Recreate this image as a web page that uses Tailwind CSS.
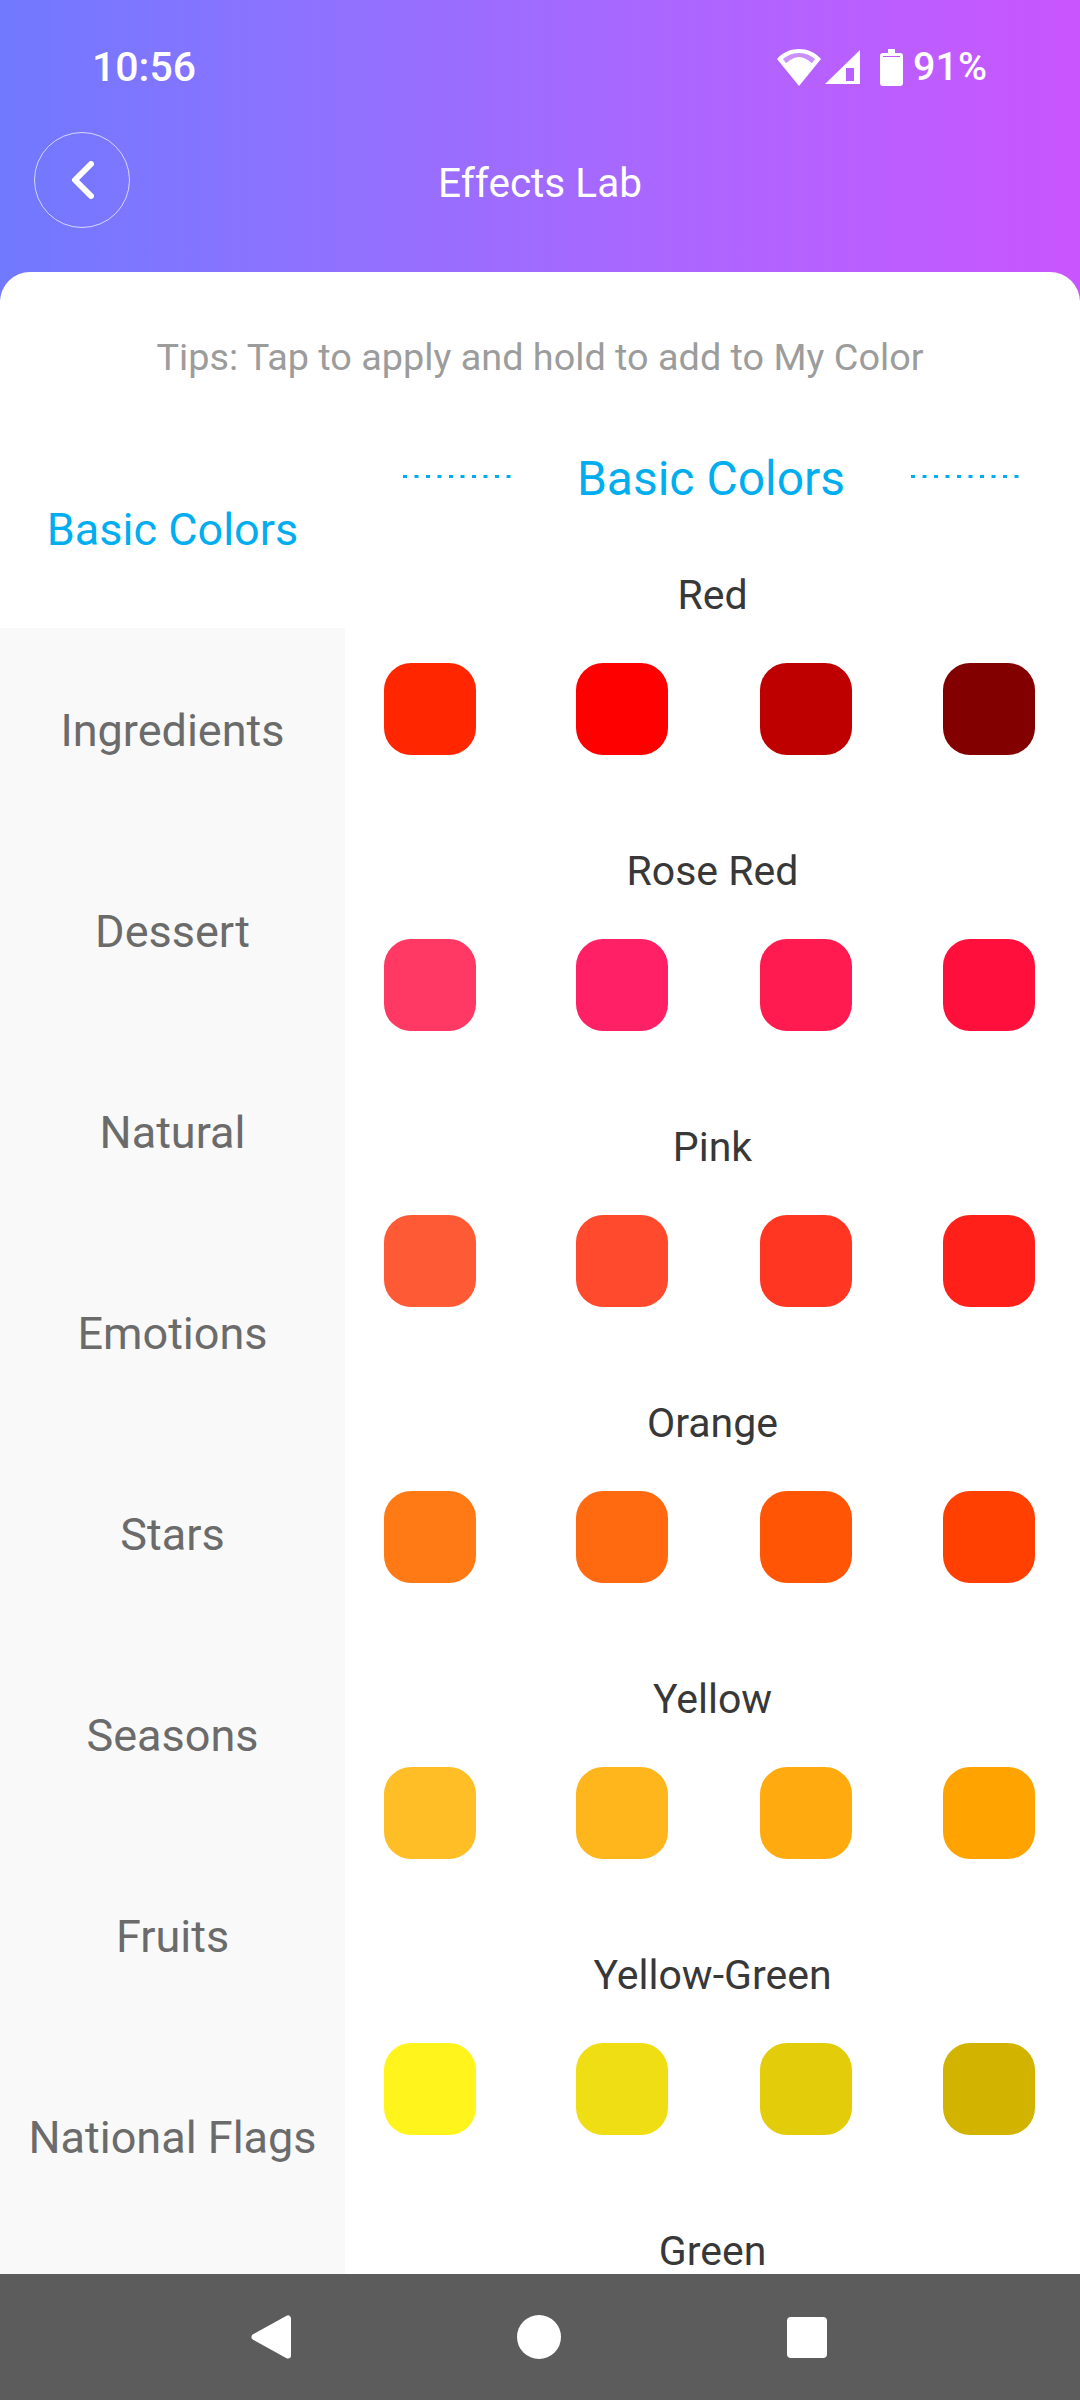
<!DOCTYPE html>
<html lang="en">
<head>
  <meta charset="UTF-8" />
  <meta name="viewport" content="width=device-width, initial-scale=1.0"/>
  <title>Effects Lab</title>
  <script src="https://cdn.jsdelivr.net/npm/@tailwindcss/browser@4"></script>
</head>
<body class="bg-white font-['Roboto',sans-serif]">
  <div class="relative w-[1080px] h-[2400px] flex flex-col overflow-hidden">
    <!-- header -->
    <header class="h-[300px] shrink-0 bg-gradient-to-r from-[#7079ff] to-[#c955ff] text-white">
      <div class="h-[132px] flex items-start justify-between pl-[92px] pr-[93px] pt-[44px]">
        <span class="text-[41px] leading-[46px] font-medium">10:56</span>
        <div class="flex items-center h-[46px]">
          <svg class="w-[44px] h-[37px]" viewBox="0 0 44 37" fill="#fff">
            <path fill-rule="evenodd" d="M22 0C30 0 38 3 44 10L22 37L0 10C6 3 14 0 22 0ZM22 4C16 4 11 6 6 10L9 14C13 11 17 8 22 8C27 8 31 11 35 14L38 10C33 6 28 4 22 4Z"/>
            <path opacity=".3" d="M22 4C16 4 11 6 6 10L9 14C13 11 17 8 22 8C27 8 31 11 35 14L38 10C33 6 28 4 22 4Z"/>
          </svg>
          <svg class="ml-[4px] w-[35px] h-[34px]" viewBox="0 0 35 34" fill="#fff">
            <path fill-rule="evenodd" d="M35 0V34H0ZM21 18V31H29V18Z"/>
          </svg>
          <svg class="ml-[20px] w-[23px] h-[37px]" viewBox="0 0 23 37" fill="#fff">
            <path fill-rule="evenodd" d="M8 0H15V4H20C22 4 23 5 23 7V34C23 36 22 37 20 37H3C1 37 0 36 0 34V7C0 5 1 4 3 4H8ZM3 7V8H20V7Z"/>
          </svg>
          <span class="ml-[10px] text-[39.5px] leading-[46px] font-medium">91%</span>
        </div>
      </div>
      <div class="grid grid-cols-[130px_1fr_130px] items-center">
        <button class="ml-[34px] w-[96px] h-[96px] rounded-full border-[1.5px] border-white/70 flex items-center justify-center">
          <svg class="w-[23px] h-[38px]" viewBox="0 0 23 38" fill="none" stroke="#fff" stroke-width="6" stroke-linecap="round" stroke-linejoin="round">
            <path d="M20 3L4 19L20 35"/>
          </svg>
        </button>
        <h1 class="pt-[6px] text-center text-[40.5px] leading-[50px]">Effects Lab</h1>
        <div></div>
      </div>
    </header>

    <!-- card -->
    <main class="-mt-[28px] flex-1 min-h-0 flex flex-col bg-white rounded-t-[30px] overflow-hidden">
      <p class="h-[156px] shrink-0 pt-[60px] text-center text-[37.8px] leading-[50px] text-[#9c9c9c]">Tips: Tap to apply and hold to add to My Color</p>
      <div class="flex flex-1 min-h-0">
        <aside class="w-[345px] shrink-0 flex flex-col bg-[#f9f9f9] text-[45px] text-[#6b6b6b] text-center">
          <div class="h-[200px] pt-[4px] shrink-0 bg-white text-[#00aeef] flex items-center justify-center">Basic Colors</div>
          <div class="h-[201px] pt-[5px] shrink-0 flex items-center justify-center">Ingredients</div>
          <div class="h-[201px] pt-[5px] shrink-0 flex items-center justify-center">Dessert</div>
          <div class="h-[201px] pt-[5px] shrink-0 flex items-center justify-center">Natural</div>
          <div class="h-[201px] pt-[5px] shrink-0 flex items-center justify-center">Emotions</div>
          <div class="h-[201px] pt-[5px] shrink-0 flex items-center justify-center">Stars</div>
          <div class="h-[201px] pt-[5px] shrink-0 flex items-center justify-center">Seasons</div>
          <div class="h-[201px] pt-[5px] shrink-0 flex items-center justify-center">Fruits</div>
          <div class="h-[201px] pt-[5px] shrink-0 flex items-center justify-center">National Flags</div>
        </aside>
        <section class="flex-1 min-w-0 pl-[39px] text-[#383838]">
          <div class="h-[102px] -ml-[39px] pl-[58px] pr-[61px] flex items-center justify-between text-[#00aeef]">
            <svg class="-mt-[5px] w-[108px] h-[3px]" viewBox="0 0 108 3"><line x1="0" y1="1.5" x2="108" y2="1.5" stroke="#00aeef" stroke-width="3" stroke-dasharray="4 7.5"/></svg>
            <h2 class="text-[48px] leading-[54px]">Basic Colors</h2>
            <svg class="-mt-[5px] w-[108px] h-[3px]" viewBox="0 0 108 3"><line x1="0" y1="1.5" x2="108" y2="1.5" stroke="#00aeef" stroke-width="3" stroke-dasharray="4 7.5"/></svg>
          </div>

          <div class="mt-[39px] h-[276px]">
            <h3 class="-ml-[39px] text-center text-[41px] leading-[52px]">Red</h3>
            <div class="mt-[42px] grid grid-cols-[192px_184px_183px_92px]">
              <div class="w-[92px] h-[92px] rounded-[27px] bg-[#ff2600]"></div>
              <div class="w-[92px] h-[92px] rounded-[27px] bg-[#ff0000]"></div>
              <div class="w-[92px] h-[92px] rounded-[27px] bg-[#bf0000]"></div>
              <div class="w-[92px] h-[92px] rounded-[27px] bg-[#820000]"></div>
            </div>
          </div>
          <div class="h-[276px]">
            <h3 class="-ml-[39px] text-center text-[41px] leading-[52px]">Rose Red</h3>
            <div class="mt-[42px] grid grid-cols-[192px_184px_183px_92px]">
              <div class="w-[92px] h-[92px] rounded-[27px] bg-[#ff3864]"></div>
              <div class="w-[92px] h-[92px] rounded-[27px] bg-[#ff2066]"></div>
              <div class="w-[92px] h-[92px] rounded-[27px] bg-[#ff1a50]"></div>
              <div class="w-[92px] h-[92px] rounded-[27px] bg-[#ff0f3c]"></div>
            </div>
          </div>
          <div class="h-[276px]">
            <h3 class="-ml-[39px] text-center text-[41px] leading-[52px]">Pink</h3>
            <div class="mt-[42px] grid grid-cols-[192px_184px_183px_92px]">
              <div class="w-[92px] h-[92px] rounded-[27px] bg-[#ff5a36]"></div>
              <div class="w-[92px] h-[92px] rounded-[27px] bg-[#ff4a2e]"></div>
              <div class="w-[92px] h-[92px] rounded-[27px] bg-[#ff3621]"></div>
              <div class="w-[92px] h-[92px] rounded-[27px] bg-[#ff2119]"></div>
            </div>
          </div>
          <div class="h-[276px]">
            <h3 class="-ml-[39px] text-center text-[41px] leading-[52px]">Orange</h3>
            <div class="mt-[42px] grid grid-cols-[192px_184px_183px_92px]">
              <div class="w-[92px] h-[92px] rounded-[27px] bg-[#ff7a14]"></div>
              <div class="w-[92px] h-[92px] rounded-[27px] bg-[#ff690f]"></div>
              <div class="w-[92px] h-[92px] rounded-[27px] bg-[#ff5505]"></div>
              <div class="w-[92px] h-[92px] rounded-[27px] bg-[#ff4000]"></div>
            </div>
          </div>
          <div class="h-[276px]">
            <h3 class="-ml-[39px] text-center text-[41px] leading-[52px]">Yellow</h3>
            <div class="mt-[42px] grid grid-cols-[192px_184px_183px_92px]">
              <div class="w-[92px] h-[92px] rounded-[27px] bg-[#ffbe26]"></div>
              <div class="w-[92px] h-[92px] rounded-[27px] bg-[#ffb61c]"></div>
              <div class="w-[92px] h-[92px] rounded-[27px] bg-[#ffab0f]"></div>
              <div class="w-[92px] h-[92px] rounded-[27px] bg-[#ffa300]"></div>
            </div>
          </div>
          <div class="h-[276px]">
            <h3 class="-ml-[39px] text-center text-[41px] leading-[52px]">Yellow-Green</h3>
            <div class="mt-[42px] grid grid-cols-[192px_184px_183px_92px]">
              <div class="w-[92px] h-[92px] rounded-[27px] bg-[#fff41c]"></div>
              <div class="w-[92px] h-[92px] rounded-[27px] bg-[#f0de14]"></div>
              <div class="w-[92px] h-[92px] rounded-[27px] bg-[#e3cc0a]"></div>
              <div class="w-[92px] h-[92px] rounded-[27px] bg-[#d1b300]"></div>
            </div>
          </div>
          <h3 class="-ml-[39px] text-center text-[41px] leading-[52px]">Green</h3>
        </section>
      </div>
    </main>

    <!-- android nav bar -->
    <nav class="h-[126px] shrink-0 bg-[#5c5c5c] flex items-center">
      <div class="w-[251px]"></div>
      <svg class="w-[40px] h-[44px]" viewBox="0 0 40 44" fill="#fff" stroke="#fff" stroke-width="6" stroke-linejoin="round">
        <path d="M3.5 22L37 3.5V40.5Z"/>
      </svg>
      <div class="ml-[226px] w-[44px] h-[44px] rounded-full bg-white"></div>
      <div class="ml-[226px] w-[40px] h-[41px] rounded-[4px] bg-white"></div>
    </nav>
  </div>
</body>
</html>
